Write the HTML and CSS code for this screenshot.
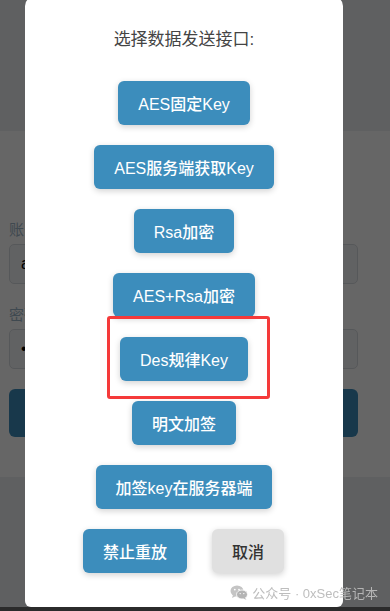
FILE: index.html
```html
<!DOCTYPE html>
<html lang="zh-CN">
<head>
  <meta charset="UTF-8" />
  <meta name="viewport" content="width=device-width, initial-scale=1.0" />
  <title>选择数据发送接口</title>
  <link rel="stylesheet" href="styles.css">
</head>
<body>
  <!-- 背景登录页（被弹窗挡住） -->
  <div class="page">
    <div class="login-card">
      <label class="field-label">账号</label>
      <input class="field-input" type="text" value="admin" />
      <label class="field-label">密码</label>
      <input class="field-input" type="password" value="123456" />
      <div class="login-btn"></div>
    </div>
  </div>

  <!-- 弹窗 -->
  <div class="overlay">
    <div class="modal">
      <p class="modal-title">选择数据发送接口:</p>
      <div class="btn-list">
        <button class="btn">AES固定Key</button>
        <button class="btn">AES服务端获取Key</button>
        <button class="btn">Rsa加密</button>
        <button class="btn">AES+Rsa加密</button>
        <button class="btn">Des规律Key</button>
        <button class="btn">明文加签</button>
        <button class="btn">加签key在服务器端</button>
        <div class="btn-row">
          <button class="btn">禁止重放</button>
          <button class="btn btn-gray">取消</button>
        </div>
      </div>
      <!-- 红框标注 -->
      <div class="mark-box"></div>
    </div>
    <div class="bottom-strip"></div>

    <div class="watermark">
      <svg width="18" height="15" viewBox="0 0 18 15">
        <ellipse cx="7" cy="6" rx="6.5" ry="5.5" fill="#c4c4c4" />
        <path d="M3 10 L2 13 L6 11 Z" fill="#c4c4c4" />
        <ellipse cx="12" cy="9.5" rx="5.5" ry="4.5" fill="#b4b4b4" stroke="#fff" stroke-width="0.8" />
        <path d="M15 13 L16.5 14.8 L13 13.6 Z" fill="#b4b4b4" />
        <circle cx="4.8" cy="4.6" r="0.9" fill="#fff" />
        <circle cx="9" cy="4.6" r="0.9" fill="#fff" />
        <circle cx="10.2" cy="8.6" r="0.7" fill="#fff" />
        <circle cx="13.8" cy="8.6" r="0.7" fill="#fff" />
      </svg>
      <span>公众号 · 0xSec笔记本</span>
    </div>
  </div>
</body>
</html>
```

FILE: styles.css
```css
* {
  box-sizing: border-box;
}
body {
  margin: 0;
  height: 611px;
  overflow: hidden;
  font-family: "Liberation Sans", "Noto Sans CJK SC", sans-serif;
  background: #eef0f3;
}
.page {
  padding-top: 131px;
}
.login-card {
  background: #fff;
  height: 346px;
  padding: 89px 32px 0 9px;
  display: flex;
  flex-direction: column;
}
.field-label {
  font-size: 15px;
  line-height: 20px;
  color: #9fb6c8;
  margin-bottom: 4px;
}
.field-input {
  height: 40px;
  border: 1px solid #d8dde2;
  border-radius: 5px;
  background: #f3f5f8;
  padding: 0 11px;
  font-size: 16px;
  color: #000;
  margin-bottom: 21px;
}
.login-btn {
  height: 48px;
  border-radius: 6px;
  background: #3c8dbc;
  margin-top: -1px;
}

/* 遮罩 + 弹窗 */
.overlay {
  position: fixed;
  inset: 0;
  background: rgba(0, 0, 0, 0.6);
  display: flex;
  flex-direction: column;
}
.modal {
  position: relative;
  flex: 1;
  width: 318px;
  margin: -4px 0 0 25px;
  background: #fff;
  border-radius: 10px 10px 6px 6px;
  padding-top: 32px;
  display: flex;
  flex-direction: column;
  align-items: center;
}
.modal-title {
  margin: 0 0 29px;
  font-size: 17px;
  line-height: 24px;
  color: #444;
}
.btn-list {
  display: flex;
  flex-direction: column;
  align-items: center;
  gap: 20px;
}
.btn {
  height: 44px;
  padding: 0 20px;
  border: none;
  border-radius: 6px;
  background: #3c8dbc;
  color: #fff;
  font-family: inherit;
  font-size: 16px;
  font-weight: 500;
  box-shadow: 0 2px 6px rgba(0, 0, 0, 0.18);
  cursor: pointer;
}
.btn-row {
  display: flex;
  gap: 25px;
  margin-left: -1px;
}
.btn-gray {
  background: #e0e0e0;
  color: #333;
}
.mark-box {
  position: absolute;
  left: 82px;
  top: 320px;
  width: 163px;
  height: 83px;
  border: 3px solid #f53a3a;
  border-radius: 3px;
}
.bottom-strip {
  height: 4px;
  background: #2b2b2b;
}
.watermark {
  position: absolute;
  right: 12px;
  bottom: 9px;
  display: flex;
  align-items: center;
  gap: 4px;
  font-size: 13px;
  color: rgba(185, 185, 185, 0.95);
}
```
